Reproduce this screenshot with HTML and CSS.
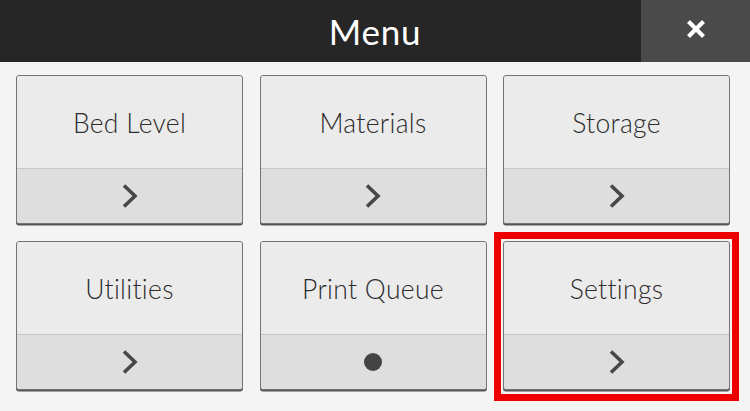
FILE: index.html
```html
<!DOCTYPE html>
<html>
<head>
<meta charset="utf-8">
<link rel="stylesheet" href="styles.css">
</head>
<body>
<header class="topbar">
  <h1 class="title">Menu</h1>
  <button class="close" aria-label="Close">
    <svg width="20" height="20" viewBox="0 0 20 20"><path d="M2.5 2.5 L17.5 17.5 M17.5 2.5 L2.5 17.5" stroke="#fff" stroke-width="4.2" stroke-linecap="butt" fill="none"/></svg>
  </button>
</header>
<main class="grid">
  <div class="card"><div class="label">Bed Level</div><div class="foot"><svg class="chev" width="18" height="26" viewBox="0 0 18 26"><path d="M3 2.5 L14 13 L3 23.5" stroke="#474747" stroke-width="3.6" fill="none"/></svg></div></div>
  <div class="card"><div class="label">Materials</div><div class="foot"><svg class="chev" width="18" height="26" viewBox="0 0 18 26"><path d="M3 2.5 L14 13 L3 23.5" stroke="#474747" stroke-width="3.6" fill="none"/></svg></div></div>
  <div class="card"><div class="label">Storage</div><div class="foot"><svg class="chev" width="18" height="26" viewBox="0 0 18 26"><path d="M3 2.5 L14 13 L3 23.5" stroke="#474747" stroke-width="3.6" fill="none"/></svg></div></div>
  <div class="card"><div class="label">Utilities</div><div class="foot"><svg class="chev" width="18" height="26" viewBox="0 0 18 26"><path d="M3 2.5 L14 13 L3 23.5" stroke="#474747" stroke-width="3.6" fill="none"/></svg></div></div>
  <div class="card"><div class="label">Print Queue</div><div class="foot"><span class="dot"></span></div></div>
  <div class="card selected"><div class="label">Settings</div><div class="foot"><svg class="chev" width="18" height="26" viewBox="0 0 18 26"><path d="M3 2.5 L14 13 L3 23.5" stroke="#474747" stroke-width="3.6" fill="none"/></svg></div></div>
</main>
</body>
</html>
```
FILE: styles.css
```css
html, body {
  margin: 0;
  padding: 0;
}
body {
  width: 750px;
  height: 411px;
  background: #f4f4f4;
  font-family: Lato, "Noto Sans", sans-serif;
  overflow: hidden;
}
.topbar {
  position: relative;
  height: 62px;
  background: #262626;
  display: flex;
  align-items: center;
  justify-content: center;
}
.title {
  margin: 0;
  color: #fff;
  font-weight: 400;
  font-size: 35px;
  line-height: 1;
  letter-spacing: 0.8px;
}
.close {
  position: absolute;
  right: 0;
  top: 0;
  width: 109px;
  height: 62px;
  border: 0;
  padding: 0;
  margin: 0;
  background: #4a4a4a;
  display: flex;
  align-items: center;
  justify-content: center;
  padding-bottom: 4px;
}
.grid {
  display: grid;
  grid-template-columns: repeat(3, 227px);
  grid-template-rows: repeat(2, 149px);
  column-gap: 16.5px;
  row-gap: 17px;
  padding: 13px 0 0 16px;
}
.card {
  position: relative;
  display: flex;
  flex-direction: column;
  box-sizing: border-box;
  border: 1px solid #747474;
  border-radius: 3px;
  box-shadow: 0 1.5px 0 #555;
  background: #ebebeb;
}
.card.selected::after {
  content: "";
  position: absolute;
  left: -10px;
  right: -10px;
  top: -10px;
  bottom: -12px;
  border: 7px solid #ee0000;
}
.label {
  height: 93px;
  display: flex;
  align-items: center;
  justify-content: center;
  color: #2c2c2c;
  font-size: 26.5px;
  font-weight: 300;
  letter-spacing: 0.3px;
  background: #ebebeb;
  border-bottom: 1px solid #c6c6c6;
  border-radius: 3px 3px 0 0;
  padding-top: 2px;
  box-sizing: border-box;
}
.foot {
  flex: 1;
  display: flex;
  align-items: center;
  justify-content: center;
  background: #dedede;
  border-radius: 0 0 3px 3px;
}
.dot {
  width: 18px;
  height: 18px;
  border-radius: 50%;
  background: #444;
}
```
